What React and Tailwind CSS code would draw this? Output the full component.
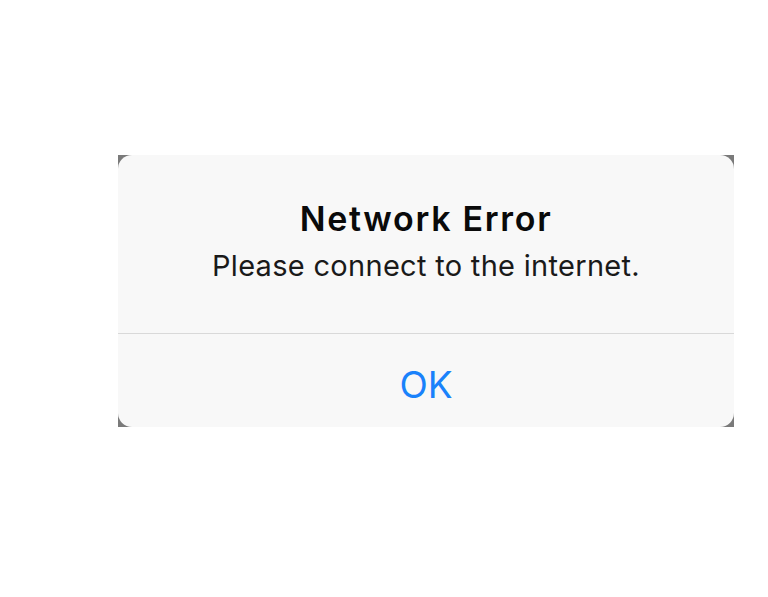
export default function App() {
  return (
    <div className="w-[768px] h-[597px] bg-white pt-[155px] pl-[118px]" style={{ fontFamily: 'Inter, "Liberation Sans", sans-serif' }}>
      <div className="w-[616px] h-[272px] bg-[#7a7a7a]">
        <div className="w-full h-full rounded-[14px] bg-[#f8f8f8] flex flex-col">
          <div className="h-[178px] flex flex-col items-center pt-[43px]">
            <h1 className="text-[34px] leading-[42px] font-semibold tracking-[1.7px] text-[#0a0a0a]">Network Error</h1>
            <p className="mt-[8px] text-[29px] leading-[36px] tracking-[0.3px] text-[#1a1a1a]">Please connect to the internet.</p>
          </div>
          <div className="h-px bg-[#d9d9d9]" />
          <button className="flex-1 flex items-center justify-center pt-[8px] text-[37px] text-[#1a82fb]">OK</button>
        </div>
      </div>
    </div>
  );
}
